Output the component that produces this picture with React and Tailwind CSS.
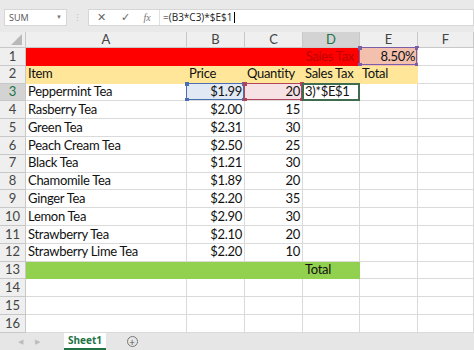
import React from "react";

const teas = [
  ["Peppermint Tea", "$1.99", "20"],
  ["Rasberry Tea", "$2.00", "15"],
  ["Green Tea", "$2.31", "30"],
  ["Peach Cream Tea", "$2.50", "25"],
  ["Black Tea", "$1.21", "30"],
  ["Chamomile Tea", "$1.89", "20"],
  ["Ginger Tea", "$2.20", "35"],
  ["Lemon Tea", "$2.90", "30"],
  ["Strawberry Tea", "$2.10", "20"],
  ["Strawberry Lime Tea", "$2.20", "10"],
];

const Handles = ({ color }) => (
  <>
    <span className={`absolute -left-[2px] -top-[2px] w-[4px] h-[4px] ${color}`} />
    <span className={`absolute -right-[2px] -top-[2px] w-[4px] h-[4px] ${color}`} />
    <span className={`absolute -left-[2px] -bottom-[2px] w-[4px] h-[4px] ${color}`} />
    <span className={`absolute -right-[2px] -bottom-[2px] w-[4px] h-[4px] ${color}`} />
  </>
);

const Cell = ({ children, className = "", right }) => (
  <div
    className={`relative flex items-center overflow-visible whitespace-nowrap border-r border-b px-[2px] ${
      right ? "justify-end" : "justify-start"
    } ${className || "border-[#dadada] bg-white"}`}
  >
    {children}
  </div>
);

const RowHead = ({ n, active }) => (
  <div
    className={`flex items-center justify-center border-r border-b border-[#c8c8c8] text-[13px] tracking-normal ${
      active ? "bg-[#d3d3d3] text-[#217346]" : "bg-[#efefef] text-[#444]"
    }`}
  >
    {n}
  </div>
);

const App = () => {
  const red = "bg-[#ff0000] border-[#ff0000]";
  const yellow = "bg-[#ffe699] border-[#ffe699]";
  const green = "bg-[#92d050] border-[#92d050]";

  return (
    <div
      className="w-[474px] h-[350px] overflow-hidden bg-white flex flex-col text-[#111]"
      style={{ fontFamily: "'Open Sans', 'Liberation Sans', sans-serif" }}
    >
      {/* formula bar */}
      <div className="h-[32px] shrink-0 bg-[#e9e9e9] flex items-start pt-[9px] pl-[4px]">
        <div className="w-[63px] h-[17px] bg-white border border-[#d6d6d6] flex items-center justify-between px-[4px]">
          <span className="text-[9px] text-[#555]">SUM</span>
          <span className="text-[6px] text-[#777]">▼</span>
        </div>
        <div className="w-[21px] h-[17px] flex items-center justify-center text-[9px] text-[#bbb]">⋮</div>
        <div className="flex-1 h-[17px] bg-white border border-[#d6d6d6] flex items-center">
          <span className="w-[24px] text-center text-[11px] text-[#666]">✕</span>
          <span className="w-[24px] text-center text-[11px] text-[#666]">✓</span>
          <span
            className="w-[20px] text-center text-[10px] italic text-[#777]"
            style={{ fontFamily: "'Liberation Serif', serif" }}
          >
            fx
          </span>
          <div className="h-full w-px bg-[#e0e0e0] mx-[2px]" />
          <span className="text-[10px] text-[#222] pl-[1px]">=(B3*C3)*$E$1</span>
          <span className="w-px h-[11px] bg-black ml-[1px]" />
        </div>
      </div>

      {/* sheet grid */}
      <div
        className="grid shrink-0 grid-cols-[26px_161px_58px_58px_57px_58px_56px] grid-rows-[16px_repeat(16,17.8px)] text-[13px] tracking-[-0.3px]"
        style={{ fontFamily: "Lato, 'Open Sans', sans-serif" }}
      >
        {/* header row */}
        <div className="relative bg-[#efefef] border-r border-b border-[#c8c8c8]">
          <svg className="absolute right-[3px] bottom-[2px]" width="11" height="11" viewBox="0 0 11 11">
            <polygon points="11,0 11,11 0,11" fill="#b9b9b9" />
          </svg>
        </div>
        {["A", "B", "C", "D", "E", "F"].map((c) => (
          <div
            key={c}
            className={`flex items-center justify-center border-r border-b border-[#c8c8c8] text-[13px] tracking-normal ${
              c === "D" ? "bg-[#d3d3d3] text-[#217346]" : "bg-[#efefef] text-[#444]"
            }`}
          >
            {c}
          </div>
        ))}

        {/* row 1 */}
        <RowHead n={1} />
        <Cell className={red} />
        <Cell className={red} />
        <Cell className={red} />
        <Cell className={`${red} text-[#c00000] pr-[5px]`} right>
          Sales Tax
        </Cell>
        <Cell className="bg-[#f2c0ad] border-[#f2c0ad]" right>
          8.50%
          <span className="absolute inset-0 -left-px -top-px border border-[#7a5fa6]" />
          <Handles color="bg-[#7a5fa6]" />
        </Cell>
        <Cell />

        {/* row 2 */}
        <RowHead n={2} />
        <Cell className={yellow}>Item</Cell>
        <Cell className={yellow}>Price</Cell>
        <Cell className={yellow}>Quantity</Cell>
        <Cell className={yellow}>Sales Tax</Cell>
        <Cell className={yellow}>Total</Cell>
        <Cell />

        {teas.map(([name, price, qty], i) => {
          const r = i + 3;
          const first = r === 3;
          return (
            <React.Fragment key={r}>
              <RowHead n={r} active={first} />
              <Cell>{name}</Cell>
              {first ? (
                <Cell className="bg-[#e1e9f5] border-[#dadada]" right>
                  {price}
                  <span className="absolute inset-0 -left-px -top-px border border-[#4a6fb0]" />
                  <Handles color="bg-[#4a6fb0]" />
                </Cell>
              ) : (
                <Cell right>{price}</Cell>
              )}
              {first ? (
                <Cell className="bg-[#f6e1e4] border-[#dadada]" right>
                  {qty}
                  <span className="absolute inset-0 -left-px -top-px border border-[#b0435a]" />
                  <Handles color="bg-[#b0435a]" />
                </Cell>
              ) : (
                <Cell right>{qty}</Cell>
              )}
              {first ? (
                <Cell className="bg-white border-[#dadada] z-10">
                  3)*$E$1
                  <span className="absolute -inset-px border-2 border-[#3f6b4f]" />
                </Cell>
              ) : (
                <Cell />
              )}
              <Cell />
              <Cell />
            </React.Fragment>
          );
        })}

        {/* row 13 */}
        <RowHead n={13} />
        <Cell className={green} />
        <Cell className={green} />
        <Cell className={green} />
        <Cell className={green}>Total</Cell>
        <Cell />
        <Cell />

        {[14, 15, 16].map((r) => (
          <React.Fragment key={r}>
            <RowHead n={r} />
            <Cell />
            <Cell />
            <Cell />
            <Cell />
            <Cell />
            <Cell />
          </React.Fragment>
        ))}
      </div>

      {/* sheet tabs */}
      <div className="flex-1 bg-[#e6e6e6] flex items-stretch">
        <div className="w-[64px] flex items-center gap-[12px] pl-[18px] text-[7px] text-[#bdbdbd]">
          <span>◀</span>
          <span>▶</span>
        </div>
        <div className="w-[42px] bg-white flex flex-col">
          <div className="flex-1 flex items-center justify-center text-[10px] font-bold text-[#217346]">
            Sheet1
          </div>
          <div className="h-[3px] bg-[#217346]" />
        </div>
        <div className="w-[52px] flex items-center justify-center">
          <span className="w-[11px] h-[11px] rounded-full border border-[#777] flex items-center justify-center text-[10px] leading-none text-[#555]">
            +
          </span>
        </div>
      </div>
    </div>
  );
};

export default App;
